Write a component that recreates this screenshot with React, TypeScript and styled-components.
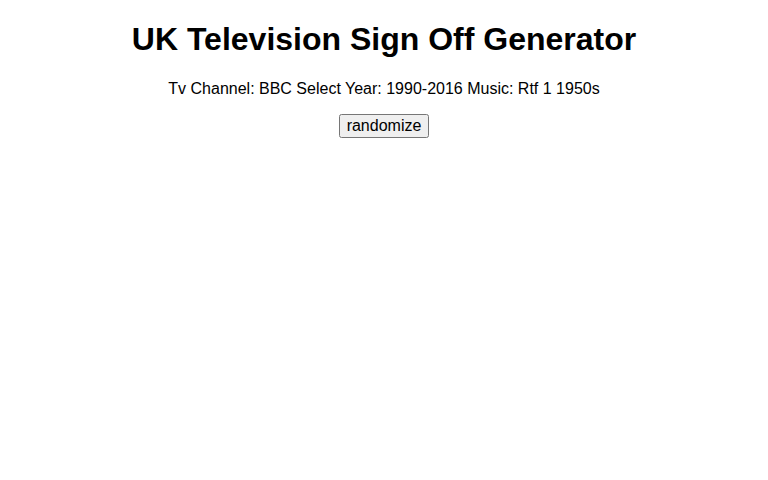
import React from "react";
import styled, { createGlobalStyle } from "styled-components";

const Global = createGlobalStyle`
  body {
    margin: 0 8px 8px;
    font-family: "Liberation Sans", Arial, sans-serif;
    background: #fff;
    color: #000;
  }
`;

const Page = styled.div`
  text-align: center;
`;

const Title = styled.h1`
  font-size: 32px;
  font-weight: bold;
  margin: 21.44px 0;
`;

const Info = styled.p`
  font-size: 16px;
  margin: 16px 0;
`;

const Button = styled.button`
  font-family: "Liberation Sans", Arial, sans-serif;
  font-size: 16px;
`;

export default function App() {
  return (
    <Page>
      <Global />
      <Title>UK Television Sign Off Generator</Title>
      <Info>Tv Channel: BBC Select Year: 1990-2016 Music: Rtf 1 1950s</Info>
      <Button>randomize</Button>
    </Page>
  );
}
